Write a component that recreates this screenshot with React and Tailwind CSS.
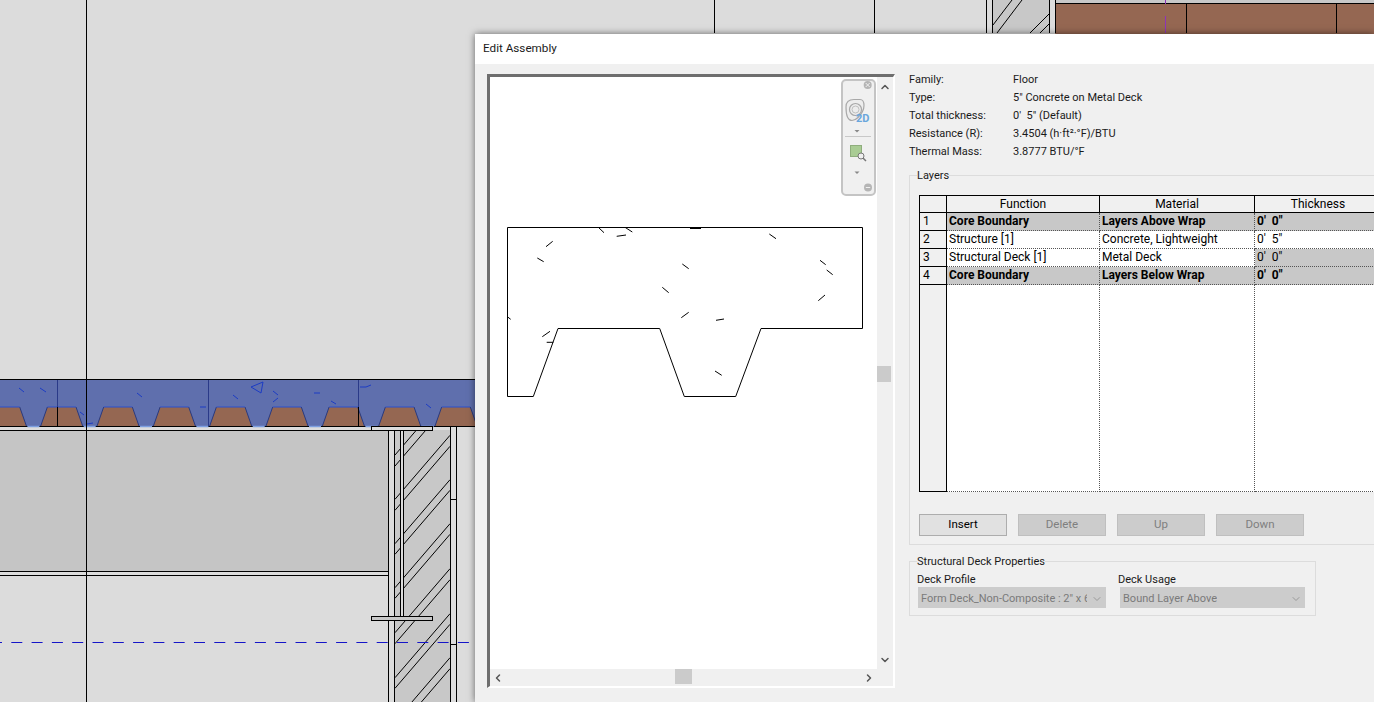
import { ChevronDown, ChevronLeft, ChevronRight, ChevronUp } from "lucide-react";

const props = [
  ["Family:", "Floor"],
  ["Type:", '5" Concrete on Metal Deck'],
  ["Total thickness:", '0\'  5" (Default)'],
  ["Resistance (R):", "3.4504 (h·ft²·°F)/BTU"],
  ["Thermal Mass:", "3.8777 BTU/°F"],
];

const layers = [
  { fn: "Core Boundary", mat: "Layers Above Wrap", th: '0\'  0"', core: true },
  { fn: "Structure [1]", mat: "Concrete, Lightweight", th: '0\'  5"' },
  { fn: "Structural Deck [1]", mat: "Metal Deck", th: '0\'  0"', greyThickness: true },
  { fn: "Core Boundary", mat: "Layers Below Wrap", th: '0\'  0"', core: true },
];

const ticks = [
  [598.3, 227.3, 604, 232.7], [625, 227.3, 632.3, 232], [616.7, 236.3, 626, 235],
  [769.3, 234, 776, 238.7], [546, 246.7, 552.7, 241.3], [537.3, 258, 543.7, 261.7],
  [682.3, 264, 688.7, 268.7], [820, 260.3, 825.7, 264.7], [826.7, 270, 832.7, 274.7],
  [662.3, 287.3, 668.7, 292.7], [818.3, 300.7, 825, 295], [681.3, 317.7, 688.7, 312.3],
  [716, 320.3, 724, 319], [507.3, 316.7, 510.7, 319.3], [542.3, 336.7, 550, 331.3],
  [546.7, 342.3, 553.3, 342.3], [715, 371, 721.7, 375.3],
];

const bandTicks = [
  [19, 388, 24, 392], [40, 388, 46, 392], [137, 393, 142, 397], [200, 407, 206, 407],
  [233, 395, 238, 399], [273, 391, 278, 395], [273, 402, 278, 398], [314, 393, 320, 393],
  [331, 401, 336, 404], [360, 387, 366, 387], [366, 387, 371, 385], [426, 404, 431, 408],
  [80, 412, 84, 415], [87, 424, 93, 423],
];

const hatchStarts = [455, 466, 499.3, 510.3, 543.7, 554.3, 587.7, 598.3, 632.7, 643.7, 677.7, 688.3, 721.7, 732.7];

const deckStarts = [-15.6, 40.7, 97, 153.4, 209.7, 266, 322.4, 378.7, 435];

function CadBackground() {
  return (
    <svg className="absolute inset-0" width="1374" height="702" viewBox="0 0 1374 702">
      <defs>
        <clipPath id="wall">
          <rect x="395" y="430" width="55" height="272" />
        </clipPath>
      </defs>
      <rect width="1374" height="702" fill="#dcdcdc" />
      <rect x="0" y="430" width="388" height="141" fill="#c5c5c5" />
      <rect x="395" y="430" width="55" height="272" fill="#c8c8c8" />
      <g clipPath="url(#wall)" stroke="#000" strokeWidth="1">
        {hatchStarts.map((y) => (
          <line key={y} x1="395" y1={y} x2="450" y2={y - 64} />
        ))}
      </g>
      <rect x="401" y="430" width="2.500" height="187" fill="#dcdcdc" />

      <rect x="0" y="379" width="475" height="47" fill="#5f6fad" />
      <line x1="0" y1="426.500" x2="475" y2="426.500" stroke="#000" />
      {deckStarts.map((x) => (
        <g key={x}>
          <polygon points={`${x},426 ${x + 6.7},407 ${x + 35.3},407 ${x + 42},426`} fill="#956752" />
          <path d={`M${x} 426L${x + 6.7} 407M${x + 35.3} 407L${x + 42} 426`} stroke="#2a3a7e" strokeWidth="1" fill="none" />
          <line x1={x + 6.7} y1="407" x2={x + 35.3} y2="407" stroke="#2b50cc" strokeWidth="1" />
          <line x1={x + 43} y1="426.500" x2={x + 55} y2="426.500" stroke="#7d9fe0" strokeWidth="1.500" />
        </g>
      ))}
      <polygon points="251,387 263,382 261,393" fill="none" stroke="#1c3cc4" strokeWidth="1" />
      <g stroke="#1c3cc4" strokeWidth="1">
        {bandTicks.map((t, i) => (
          <line key={i} x1={t[0]} y1={t[1]} x2={t[2]} y2={t[3]} />
        ))}
      </g>
      <g stroke="#2a3a88" strokeWidth="1">
        <line x1="57.500" y1="379" x2="57.500" y2="407" />
        <line x1="208.500" y1="379" x2="208.500" y2="426" />
        <line x1="358.500" y1="379" x2="358.500" y2="407" />
      </g>
      <g stroke="#000" strokeWidth="1" fill="none">
        <line x1="57.500" y1="407" x2="57.500" y2="426" />
        <line x1="358.500" y1="407" x2="358.500" y2="426" />
        <line x1="0" y1="379.500" x2="475" y2="379.500" />
        <line x1="0" y1="430.500" x2="388" y2="430.500" />
        <line x1="0" y1="571.500" x2="388" y2="571.500" />
        <line x1="0" y1="575.500" x2="388" y2="575.500" />
        <line x1="86.500" y1="0" x2="86.500" y2="702" />
        <line x1="388.500" y1="427" x2="388.500" y2="702" />
        <line x1="394.500" y1="427" x2="394.500" y2="702" />
        <line x1="400.500" y1="430" x2="400.500" y2="617" />
        <line x1="403.500" y1="430" x2="403.500" y2="617" />
        <line x1="450.500" y1="427" x2="450.500" y2="702" />
        <line x1="456.500" y1="427" x2="456.500" y2="702" />
        <line x1="450" y1="499.500" x2="456" y2="499.500" />
        <line x1="450" y1="644.500" x2="456" y2="644.500" />
        <rect x="371.500" y="426.500" width="61" height="4" fill="#dcdcdc" />
        <rect x="371.500" y="616.500" width="61" height="4" fill="#c8c8c8" />
      </g>
      <line x1="0" y1="642.500" x2="475" y2="642.500" stroke="#1515c8" strokeWidth="1" strokeDasharray="11 9.300" strokeDashoffset="9" />

      <rect x="992" y="0" width="57.500" height="33" fill="#c8c8c8" />
      <rect x="1055" y="0" width="319" height="4" fill="#c8c8c8" />
      <rect x="1055" y="4" width="319" height="30" fill="#956752" />
      <g stroke="#000" strokeWidth="1">
        <line x1="714.500" y1="0" x2="714.500" y2="33" />
        <line x1="874.500" y1="0" x2="874.500" y2="33" />
        <line x1="986.500" y1="0" x2="986.500" y2="33" />
        <line x1="992.500" y1="0" x2="992.500" y2="33" />
        <line x1="1049.500" y1="0" x2="1049.500" y2="33" />
        <line x1="1055.500" y1="0" x2="1055.500" y2="33" />
        <line x1="1055" y1="3.500" x2="1374" y2="3.500" />
        <line x1="1186.500" y1="4" x2="1186.500" y2="33" />
        <line x1="1336.500" y1="4" x2="1336.500" y2="33" />
        <line x1="993" y1="25" x2="1012" y2="0" />
        <line x1="997" y1="33" x2="1022" y2="0" />
        <line x1="1030" y1="33" x2="1049" y2="14" />
        <line x1="1040" y1="33" x2="1049" y2="24" />
      </g>
      <line x1="1165.500" y1="0" x2="1165.500" y2="4" stroke="#8d34b8" />
      <line x1="1165.500" y1="16" x2="1165.500" y2="33" stroke="#8d34b8" />
    </svg>
  );
}

function SectionDrawing() {
  return (
    <svg className="block" width="387" height="592" viewBox="490 77 387 592">
      <polygon
        points="507.500,227.500 862.500,227.500 862.500,328.500 761,328.500 735.700,396.500 684.300,396.500 659.700,328.500 558,328.500 533.300,396.500 507.500,396.500"
        fill="none"
        stroke="#000"
        strokeWidth="1"
      />
      <line x1="690" y1="228" x2="701" y2="228" stroke="#000" strokeWidth="2" />
      <g stroke="#000" strokeWidth="1">
        {ticks.map((t, i) => (
          <line key={i} x1={t[0]} y1={t[1]} x2={t[2]} y2={t[3]} />
        ))}
      </g>
    </svg>
  );
}

function NavBar() {
  return (
    <div className="absolute left-[351px] top-[2px] w-[35px] h-[117px] rounded-[5px] border-2 border-[#c4c4c4] bg-[#f0f0f0]">
      <svg className="absolute -left-[2px] -top-[2px]" width="35" height="117" viewBox="841 79 35 117">
        <circle cx="867.700" cy="85" r="4" fill="#b5b5b5" />
        <path d="M865.700 83l4 4M869.700 83l-4 4" stroke="#f0f0f0" strokeWidth="1" />
        <path d="M846 107c0-5 3-7.500 8-7.500h6c3 0 4 2 4 6 0 5-3 9-6 12-2 2-4 3-6 3-4 0-6-6-6-13.500z" fill="#ededed" stroke="#a8a8a8" strokeWidth="1.200" />
        <circle cx="855.500" cy="109.500" r="6" fill="none" stroke="#a8a8a8" strokeWidth="1.200" />
        <circle cx="855.500" cy="109.500" r="3.500" fill="none" stroke="#c0c0c0" strokeWidth="1" />
        <path d="M854.500 130h5l-2.500 2.500z" fill="#888" />
        <line x1="845" y1="136.500" x2="871" y2="136.500" stroke="#c8c8c8" />
        <rect x="850.500" y="145.500" width="11" height="11" fill="#a9cc94" stroke="#8fae7d" />
        <circle cx="861" cy="156" r="3" fill="#f0f0f0" stroke="#777" />
        <line x1="863" y1="158" x2="866" y2="161" stroke="#777" strokeWidth="1.500" />
        <path d="M854.500 171.500h5l-2.500 2.500z" fill="#888" />
        <circle cx="868" cy="187.500" r="4" fill="#b5b5b5" />
        <line x1="865.800" y1="187.500" x2="870.200" y2="187.500" stroke="#f0f0f0" />
      </svg>
      <span className="absolute left-[13px] top-[32px] text-[11px] leading-none font-bold text-[#6aa6dc]">2D</span>
    </div>
  );
}

function Preview() {
  return (
    <div className="mt-[4px] flex h-[614px] w-[408px] flex-col border-t-[3px] border-l-[3px] border-r-2 border-b-2 border-t-[#6e6e6e] border-l-[#6e6e6e] border-r-white border-b-white">
      <div className="flex h-[592px]">
        <div className="relative w-[387px] bg-white">
          <SectionDrawing />
          <NavBar />
        </div>
        <div className="flex w-[16px] flex-col items-center justify-between pt-[4px] pb-[3px] text-[#555]">
          <ChevronUp size={12} strokeWidth={3} />
          <div className="h-[16px] w-[14px] self-start bg-[#cbcbcb]" />
          <ChevronDown size={12} strokeWidth={3} />
        </div>
      </div>
      <div className="flex h-[17px] w-[387px] items-center justify-between px-[2px] text-[#555]">
        <ChevronLeft size={12} strokeWidth={3} />
        <div className="h-[15px] w-[17px] self-start bg-[#cbcbcb]" />
        <ChevronRight size={12} strokeWidth={3} />
      </div>
    </div>
  );
}

function LayersTable() {
  return (
    <div className="flex h-[297px] w-[462px] flex-col border-t border-l border-black bg-white text-[12px] text-black">
      <div className="grid h-[17px] shrink-0 grid-cols-[27px_153px_155px_126px] bg-[#f0f0f0] text-center leading-[16px]">
        <div className="border-r border-b border-black" />
        <div className="border-r border-b border-black">Function</div>
        <div className="border-r border-b border-black">Material</div>
        <div className="border-b border-black">Thickness</div>
      </div>
      {layers.map((row, i) => (
        <div
          key={i}
          className={`grid h-[18px] shrink-0 grid-cols-[27px_153px_155px_126px] whitespace-pre leading-[16px] ${row.core ? "bg-[#c8c8c8] font-bold" : ""}`}
        >
          <div className="border-r border-b border-black bg-[#f0f0f0] pl-[3px] font-normal">{i + 1}</div>
          <div className="border-r border-b border-dotted border-r-[#555] border-b-[#555] pl-[2px]">{row.fn}</div>
          <div className="border-r border-b border-dotted border-r-[#555] border-b-[#555] pl-[2px]">{row.mat}</div>
          <div className={`border-b border-dotted border-b-[#555] pl-[2px] ${row.greyThickness ? "bg-[#c8c8c8]" : ""}`}>{row.th}</div>
        </div>
      ))}
      <div className="grid flex-1 grid-cols-[27px_153px_155px_126px]">
        <div className="border-r border-b border-black bg-[#f0f0f0]" />
        <div className="border-r border-b border-dotted border-r-[#555] border-b-[#555]" />
        <div className="border-r border-b border-dotted border-r-[#555] border-b-[#555]" />
        <div className="border-b border-dotted border-b-[#555]" />
      </div>
    </div>
  );
}

function DeckSelect({ value, className }) {
  return (
    <div className={`flex h-[21px] items-center justify-between bg-[#cccccc] pl-[3px] pr-[3px] pt-[3px] text-[#7a7a7a] ${className}`}>
      <span className="overflow-hidden whitespace-nowrap">{value}</span>
      <ChevronDown className="ml-[4px] shrink-0 text-[#999]" size={12} />
    </div>
  );
}

export default function App() {
  return (
    <div className="relative h-[702px] w-[1374px] overflow-hidden font-['Roboto',sans-serif] text-[11px] text-[#1a1a1a]">
      <CadBackground />

      <div className="absolute left-[475px] top-[34px] h-[668px] w-[899px] bg-[#f0f0f0] shadow-[0_0_7px_rgba(0,0,0,0.55)]">
        <div className="flex h-[30px] items-center bg-white pl-[8px] text-[11.7px]">Edit Assembly</div>

        <div className="flex items-start pl-[12px] pt-[6px]">
          <Preview />

          <div className="ml-[14px] w-[465px] shrink-0">
            <div>
              {props.map(([label, value]) => (
                <div key={label} className="flex h-[18px] items-center whitespace-pre pt-[2px]">
                  <span className="w-[104px]">{label}</span>
                  <span>{value}</span>
                </div>
              ))}
            </div>

            <fieldset className="mt-[7px] border border-r-0 border-[#dcdcdc] pb-[8px] pl-[9px] pt-[12px]">
              <legend className="-ml-[2px] h-[16px] leading-[18px]">Layers</legend>
              <LayersTable />
              <div className="mt-[22px] flex gap-[11px] text-[11.5px]">
                <button className="h-[22px] w-[88px] border border-[#adadad] bg-[#e1e1e1] text-black">Insert</button>
                <button className="h-[22px] w-[88px] border border-[#bfbfbf] bg-[#cccccc] text-[#7f7f7f]">Delete</button>
                <button className="h-[22px] w-[88px] border border-[#bfbfbf] bg-[#cccccc] text-[#7f7f7f]">Up</button>
                <button className="h-[22px] w-[88px] border border-[#bfbfbf] bg-[#cccccc] text-[#7f7f7f]">Down</button>
              </div>
            </fieldset>

            <fieldset className="mt-[8px] w-[407px] border border-[#dcdcdc] pb-[7px] pl-[7px] pt-[2px]">
              <legend className="h-[16px] leading-[18px]">Structural Deck Properties</legend>
              <div className="flex">
                <div className="w-[201px]">
                  <div className="h-[16px] leading-[18px]">Deck Profile</div>
                  <DeckSelect value={'Form Deck_Non-Composite : 2" x 6'} className="ml-[1px] w-[188px]" />
                </div>
                <div>
                  <div className="h-[16px] leading-[18px]">Deck Usage</div>
                  <DeckSelect value="Bound Layer Above" className="ml-[2px] w-[185px]" />
                </div>
              </div>
            </fieldset>
          </div>
        </div>
      </div>
    </div>
  );
}
